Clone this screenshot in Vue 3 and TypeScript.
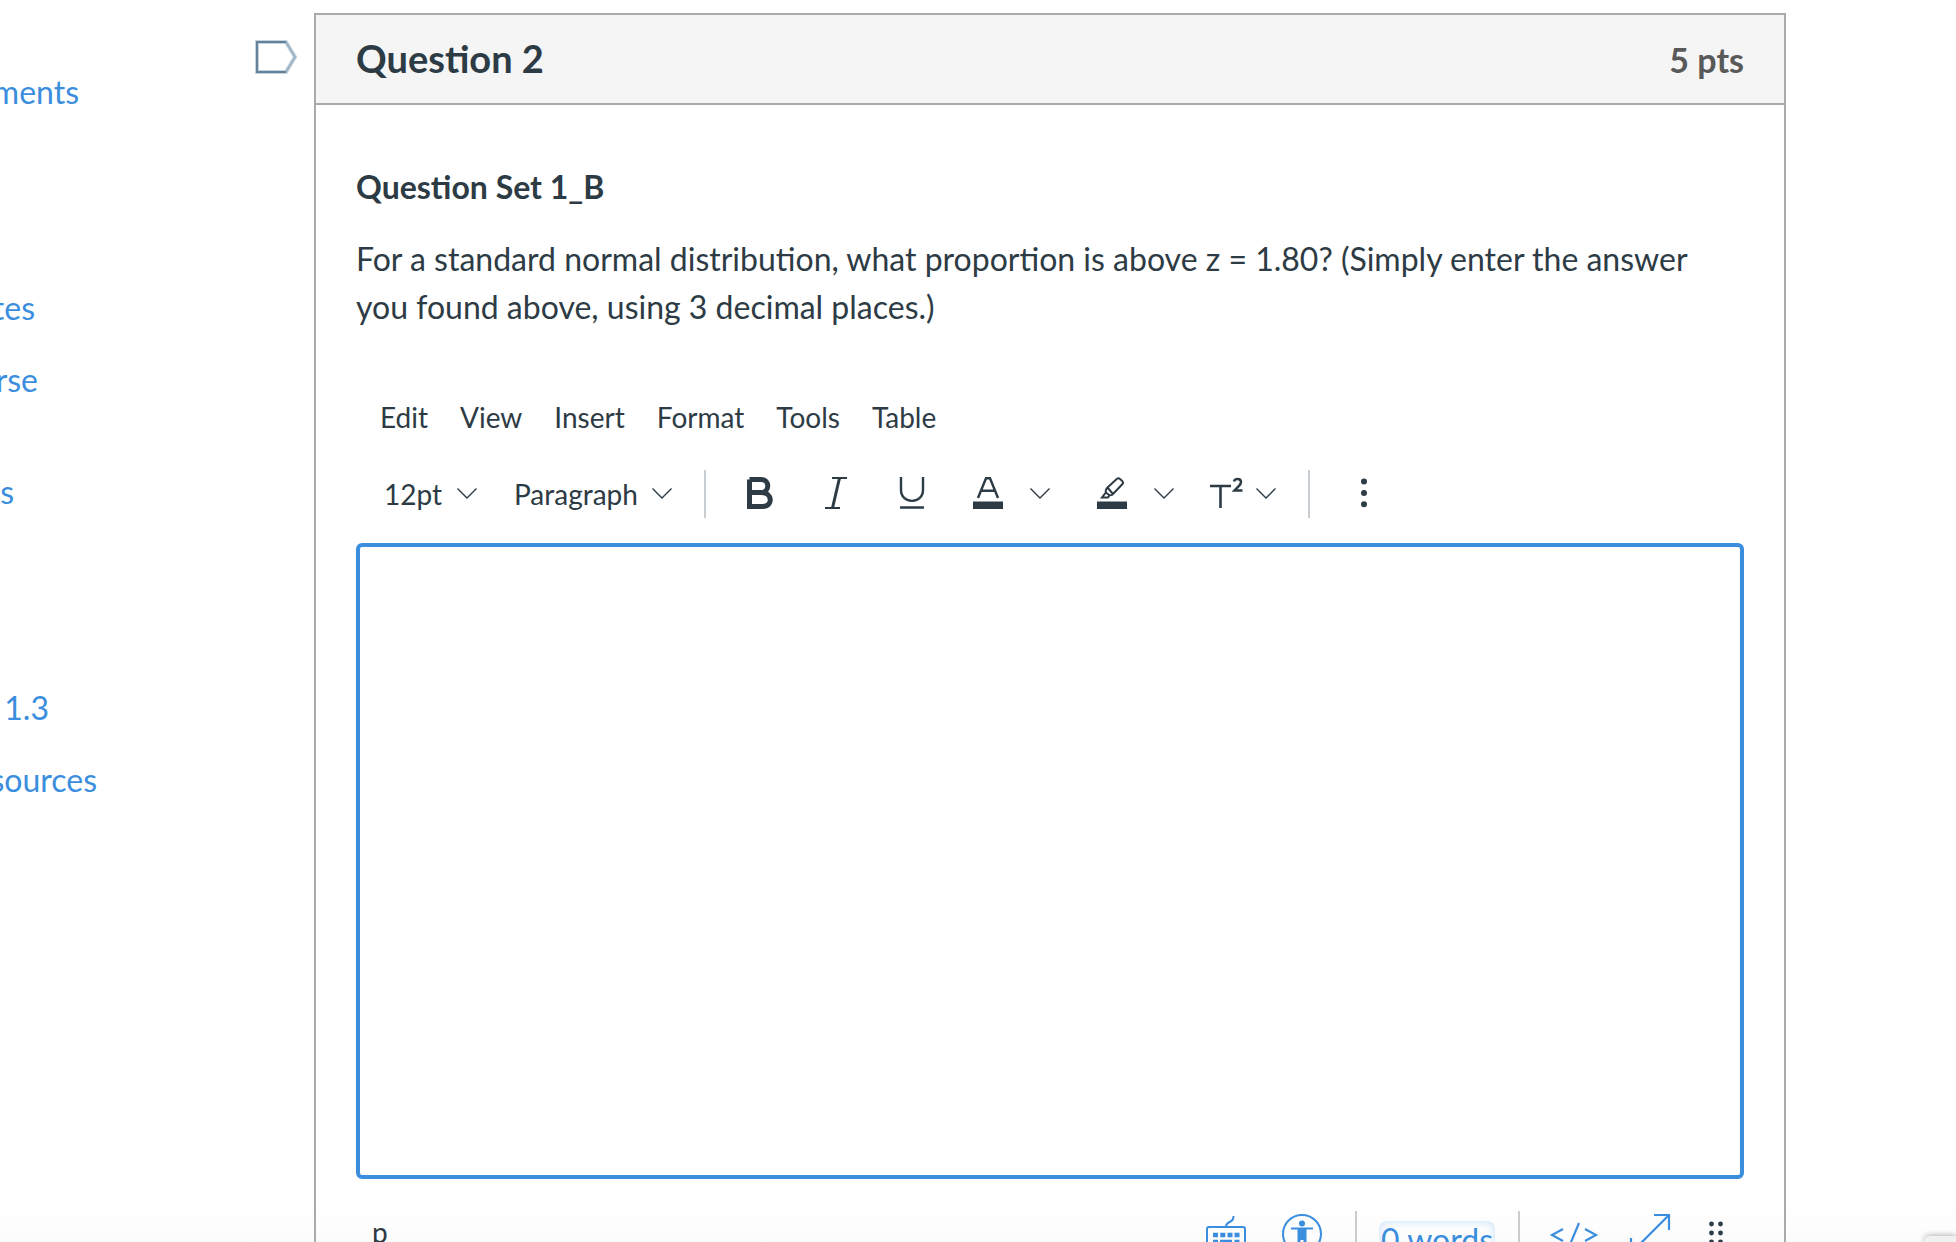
<script setup lang="ts">
import { ref } from 'vue'

interface NavItem {
  label: string
  end: number
  lines: number
  skip?: number
}

const navItems: NavItem[] = [
  { label: 'ments', end: 79, lines: 1 },
  { label: 'tes', end: 35, lines: 1, skip: 2 },
  { label: 'rse', end: 38, lines: 1 },
  { label: 's', end: 14, lines: 2 },
  { label: '1.3', end: 49, lines: 1, skip: 2 },
  { label: 'sources', end: 97, lines: 1 },
]

const menus = ['Edit', 'View', 'Insert', 'Format', 'Tools', 'Table']
const answer = ref('')
const fontSize = ref('12pt')
const block = ref('Paragraph')
const chevron = 'M0.5 0.5 L10 10 L19.5 0.5'
</script>

<template>
  <div class="page">
    <nav class="course-nav" aria-label="Course">
      <div
        v-for="item in navItems"
        :key="item.label"
        class="nav-row"
        :class="{ wrapped: item.lines === 2, spaced: item.skip }"
        :style="{ width: item.end + 'px' }"
      >
        <a href="#">{{ item.label }}</a>
      </div>
    </nav>

    <main class="question-area">
      <button class="flag" type="button" aria-label="Flag question">
        <svg width="40" height="32" viewBox="0 0 40 32" fill="none">
          <path d="M1 1H30L39 16L30 31H1Z" stroke="#c3d3df" stroke-width="4" />
          <path d="M30 1L39 16L30 31" stroke="#9db4c5" stroke-width="2" />
          <path d="M30 1H1V31H30" stroke="#658299" stroke-width="2" />
        </svg>
      </button>

      <section class="card">
        <header class="card-head">
          <h2>Question 2</h2>
          <span class="points">5 pts</span>
        </header>

        <div class="card-body">
          <h3>Question Set 1_B</h3>
          <p class="prompt">
            For a standard normal distribution, what proportion is above z = 1.80? (Simply enter the answer you found
            above, using 3 decimal places.)
          </p>

          <div class="menubar">
            <button v-for="menu in menus" :key="menu" type="button">{{ menu }}</button>
          </div>

          <div class="toolbar">
            <label class="picker">
              <select v-model="fontSize" aria-label="Font size">
                <option>12pt</option>
              </select>
              <svg width="20" height="12" viewBox="0 0 20 12" class="thin"><path :d="chevron" /></svg>
            </label>
            <label class="picker block-picker">
              <select v-model="block" aria-label="Block format">
                <option>Paragraph</option>
              </select>
              <svg width="20" height="12" viewBox="0 0 20 12" class="thin"><path :d="chevron" /></svg>
            </label>
            <span class="rule"></span>
            <button class="tool" type="button" aria-label="Bold">
              <svg width="26" height="34" viewBox="0 0 26 34" fill="none" stroke="#2d3b45" stroke-width="5">
                <path d="M2.5 2.5H14C23 2.5 23 15.5 14 15.5H2.5M14 15.5C26 15.5 26 29.5 16 29.5H2.5V2.5" />
              </svg>
            </button>
            <button class="tool" type="button" aria-label="Italic">
              <svg width="22" height="34" viewBox="0 0 22 34" fill="none" stroke="#2d3b45" stroke-width="2">
                <path d="M7 1H22M0 31H15" /><path d="M14.5 1L7.5 31" stroke-width="3" />
              </svg>
            </button>
            <button class="tool" type="button" aria-label="Underline">
              <svg width="26" height="34" viewBox="0 0 26 34" fill="none" stroke="#2d3b45" stroke-width="2.4">
                <path d="M2 0V13C2 27.500 24 27.500 24 13V0M1 30.500H25" />
              </svg>
            </button>
            <button class="tool" type="button" aria-label="Text color">
              <svg width="30" height="34" viewBox="0 0 30 34" fill="none" stroke="#2d3b45" stroke-width="2.400">
                <path d="M5 21L13 1.200H17L25 21M8 13.700H22" />
                <path d="M0 24.500H30V32H0Z" fill="#2d3b45" stroke="none" />
              </svg>
            </button>
            <button class="arrow" type="button" aria-label="Choose text color">
              <svg width="20" height="12" viewBox="0 0 20 12" class="thin"><path :d="chevron" /></svg>
            </button>
            <button class="tool highlighter" type="button" aria-label="Highlight">
              <svg width="30" height="34" viewBox="0 0 30 34" fill="none" stroke="#2d3b45" stroke-width="2">
                <path
                  d="M10.500 10.500L20 1.800Q21.500 0.500 23 2L25.500 4.300Q26.700 5.700 25.500 7L16 17L10.500 10.500Q8.300 12.500 8.800 15.500L5 20.500H11L12.500 18.300Q15 18.500 16 17M8.800 15.500L12.500 18.300"
                />
                <path d="M0 24.500H30V32H0Z" fill="#2d3b45" stroke="none" />
              </svg>
            </button>
            <button class="arrow" type="button" aria-label="Choose highlight color">
              <svg width="20" height="12" viewBox="0 0 20 12" class="thin"><path :d="chevron" /></svg>
            </button>
            <button class="script" type="button" aria-label="Superscript">
              <svg width="32" height="34" viewBox="0 0 32 34" fill="none" stroke="#2d3b45">
                <path d="M0 9H21M10.500 9V31" stroke-width="2.600" />
                <path d="M24 4.500Q24.500 2 27.500 2Q31 2 31 5Q31 7 28.500 9.300L24.500 13.400H32.500" stroke-width="2.500" />
              </svg>
              <svg width="20" height="12" viewBox="0 0 20 12" class="thin"><path :d="chevron" /></svg>
            </button>
            <span class="rule"></span>
            <button class="tool" type="button" aria-label="More">
              <svg width="8" height="34" viewBox="0 0 8 34" fill="#2d3b45">
                <circle cx="4" cy="4.500" r="3" /><circle cx="4" cy="16" r="3" /><circle cx="4" cy="27.300" r="3" />
              </svg>
            </button>
          </div>

          <textarea v-model="answer" class="editor" aria-label="Answer"></textarea>

          <footer class="statusbar">
            <span class="path">p</span>
            <button class="status-icon" type="button" aria-label="Keyboard shortcuts">
              <svg width="40" height="42" viewBox="0 0 40 42" fill="none" stroke="#3b8ede" stroke-width="2">
                <rect x="1" y="13" width="38" height="27" rx="2" />
                <path d="M20 13C20 6 28 10 27.500 2" />
                <path
                  d="M7 21H12M14.300 21H19.300M21.500 21H26.500M28.500 21H33.500M7 28H12M14 28H26M28.500 28H33.500M7 34H33"
                  stroke-width="4.400"
                />
              </svg>
            </button>
            <button class="status-icon" type="button" aria-label="Accessibility checker">
              <svg width="40" height="42" viewBox="0 0 40 42" fill="none" stroke="#3b8ede" stroke-width="2">
                <circle cx="20" cy="20" r="19" />
                <circle cx="20" cy="9.500" r="3" fill="#3b8ede" stroke="none" />
                <path d="M9 14.500H31" />
                <path d="M15.500 14H24.500V33H21.500V26H18.500V33H15.500Z" fill="#3b8ede" stroke="none" />
              </svg>
            </button>
            <span class="rule grey"></span>
            <button class="words" type="button">0 words</button>
            <span class="rule grey"></span>
            <button class="status-icon" type="button" aria-label="HTML editor">
              <svg width="48" height="42" viewBox="0 0 48 42" fill="none" stroke="#3b8ede" stroke-width="2.200">
                <path d="M13 15L2 21L13 27M35 15L46 21L35 27M29 9L19 33" />
              </svg>
            </button>
            <button class="status-icon expand" type="button" aria-label="Fullscreen">
              <svg width="40" height="42" viewBox="0 0 40 42" fill="none" stroke="#3b8ede" stroke-width="2.2">
                <path d="M24 1H39V16M39 1L1 39M1 24V39H16" />
              </svg>
            </button>
            <button class="status-icon grip" type="button" aria-label="Resize">
              <svg width="14" height="42" viewBox="0 0 14 42" fill="#2d3b45">
                <circle cx="2.500" cy="10" r="2.400" /><circle cx="11.500" cy="10" r="2.400" />
                <circle cx="2.500" cy="19" r="2.400" /><circle cx="11.500" cy="19" r="2.400" />
                <circle cx="2.500" cy="28" r="2.400" /><circle cx="11.500" cy="28" r="2.400" />
              </svg>
            </button>
          </footer>
        </div>
      </section>
    </main>
    <div class="corner-popup"></div>
  </div>
</template>

<style>
body {
  margin: 0;
  background: #fff;
}
</style>

<style scoped>
.page {
  position: relative;
  display: flex;
  height: 100vh;
  overflow: hidden;
  font-family: Lato, 'Liberation Sans', sans-serif;
  font-size: 32px;
  line-height: 48px;
  color: #2d3b45;
  background: linear-gradient(to top, #fcfcfc, #fff 40px);
}
button,
select,
textarea {
  margin: 0;
  padding: 0;
  border: 0;
  background: none;
  font: inherit;
  color: inherit;
}
svg {
  display: block;
  flex: none;
  overflow: visible;
}
.thin {
  fill: none;
  stroke: #2d3b45;
  stroke-width: 1.4;
}
.course-nav {
  width: 256px;
  flex: none;
  padding-top: 56px;
}
.nav-row {
  display: flex;
  justify-content: flex-end;
  height: 72px;
  box-sizing: border-box;
  padding-top: 12px;
  white-space: nowrap;
}
.nav-row.spaced {
  margin-top: 144px;
}
.nav-row.wrapped {
  height: 112px;
  padding-top: 52px;
}
.nav-row a {
  color: #3b8ede;
  text-decoration: none;
}
.question-area {
  flex: 1;
  min-width: 0;
  display: flex;
  align-items: flex-start;
  gap: 18px;
  padding: 13px 170px 0 0;
}
.flag {
  margin-top: 28px;
}
.card {
  flex: 1;
  min-width: 0;
  border: 2px solid #aaa;
}
.card-head {
  display: flex;
  align-items: baseline;
  justify-content: space-between;
  box-sizing: border-box;
  height: 90px;
  padding: 19px 40px 0;
  border-bottom: 2px solid #aaa;
  background: #f5f5f5;
}
h2,
h3,
p {
  margin: 0;
}
h2 {
  font-size: 38px;
}
h3 {
  font-size: 32px;
}
.points {
  font-size: 34px;
  font-weight: 700;
  color: #595959;
}
.card-body {
  padding: 58px 40px 32px;
}
.prompt {
  margin: 24px 0 66px;
}
.menubar {
  display: flex;
  gap: 32px;
  padding-left: 24px;
  font-size: 28px;
  line-height: 40px;
}
.toolbar {
  display: flex;
  align-items: center;
  height: 48px;
  margin: 33px 0 25px;
  padding-left: 28px;
  font-size: 28px;
}
.picker {
  display: flex;
  align-items: center;
  margin-right: 37px;
}
.block-picker {
  margin-right: 32px;
}
.picker select {
  appearance: none;
  margin-right: -20px;
  padding-right: 34px;
}
.picker svg {
  pointer-events: none;
}
.rule {
  width: 2px;
  height: 48px;
  margin-right: 16px;
  background: #c7cdd1;
}
.rule.grey {
  background: #ccc;
  margin: 0 22px 0 33px;
}
.tool {
  display: flex;
  justify-content: center;
  width: 76px;
}
.arrow {
  display: flex;
  justify-content: center;
  width: 28px;
}
.highlighter {
  margin-left: 20px;
}
.script {
  display: flex;
  align-items: center;
  gap: 14px;
  margin: 0 32px;
}
.editor {
  display: block;
  box-sizing: border-box;
  width: 100%;
  height: 636px;
  padding: 16px;
  border: 4px solid #3b8ede;
  border-radius: 6px;
  outline: none;
  resize: none;
}
.statusbar {
  display: flex;
  align-items: flex-start;
  margin-top: 32px;
  padding: 0 21px 0 16px;
}
.path {
  margin-right: auto;
  font-size: 28px;
  line-height: 42px;
}
.status-icon {
  margin-top: 3px;
}
.status-icon + .status-icon {
  margin-left: 36px;
}
.words {
  margin-top: 10px;
  padding: 0 2px;
  border-radius: 8px;
  line-height: 38px;
  color: #3b8ede;
  box-shadow: inset 0 0 10px #c4dff7;
}
.words + .rule.grey {
  margin: 0 30px 0 23px;
}
.status-icon + .expand {
  margin-left: 32px;
}
.status-icon + .grip {
  margin-left: 39px;
}
.corner-popup {
  position: absolute;
  right: 0;
  bottom: 0;
  width: 32px;
  height: 6px;
  border-radius: 8px 0 0 0;
  background: #f0f0f0;
  box-shadow: 0 0 6px #999;
}
</style>
